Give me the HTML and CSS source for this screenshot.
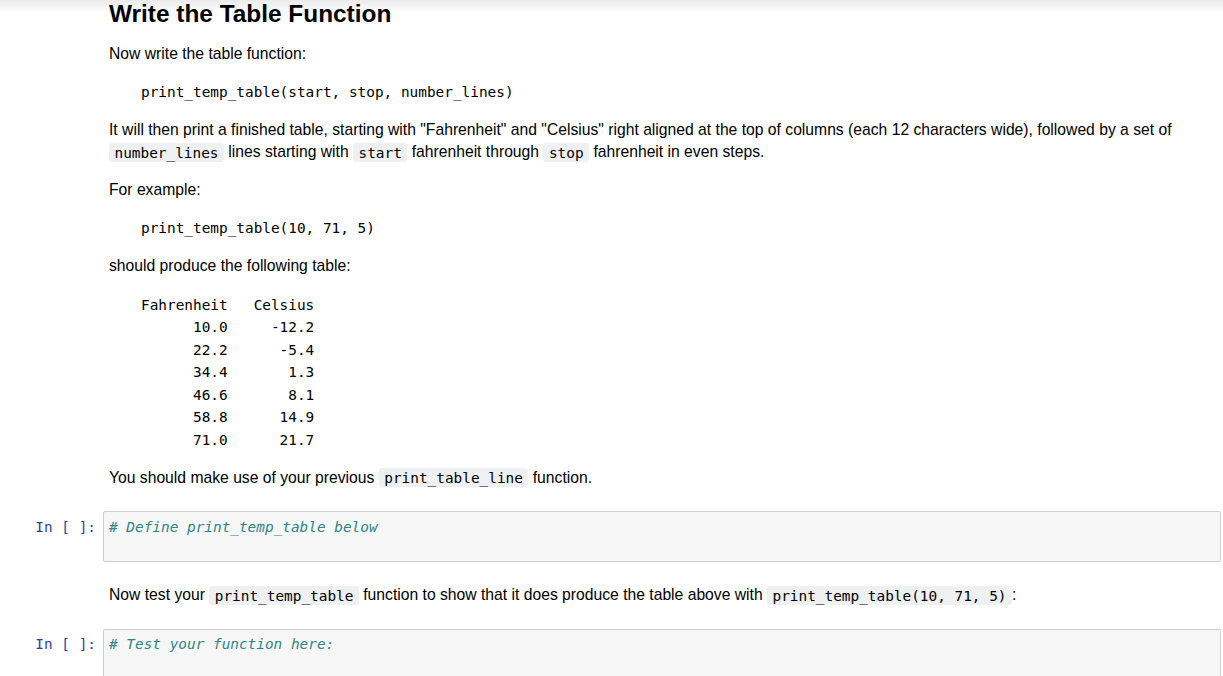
FILE: index.html
```html
<!DOCTYPE html>
<html>
<head>
<meta charset="utf-8">
<link rel="stylesheet" href="styles.css">
</head>
<body>
<div class="notebook">
  <div class="cell">
    <div class="prompt"></div>
    <div class="md">
      <h2 class="title">Write the Table Function</h2>
      <p>Now write the table function:</p>
      <pre class="block">print_temp_table(start, stop, number_lines)</pre>
      <p>It will then print a finished table, starting with "Fahrenheit" and "Celsius" right aligned at the top of columns (each 12 characters wide), followed by a set of <code>number_lines</code> lines starting with <code>start</code> fahrenheit through <code>stop</code> fahrenheit in even steps.</p>
      <p>For example:</p>
      <pre class="block">print_temp_table(10, 71, 5)</pre>
      <p>should produce the following table:</p>
      <pre class="block">Fahrenheit   Celsius
      10.0     -12.2
      22.2      -5.4
      34.4       1.3
      46.6       8.1
      58.8      14.9
      71.0      21.7</pre>
      <p>You should make use of your previous <code>print_table_line</code> function.</p>
    </div>
  </div>
  <div class="cell">
    <div class="prompt code-prompt">In [ ]:</div>
    <div class="input"><span class="comment"># Define print_temp_table below</span>
</div>
  </div>
  <div class="cell">
    <div class="prompt"></div>
    <div class="md">
      <p>Now test your <code>print_temp_table</code> function to show that it does produce the table above with <code>print_temp_table(10, 71, 5)</code>:</p>
    </div>
  </div>
  <div class="cell">
    <div class="prompt code-prompt">In [ ]:</div>
    <div class="input"><span class="comment"># Test your function here:</span>
</div>
  </div>
</div>
</body>
</html>
```
FILE: styles.css
```css
html, body {
  margin: 0;
  padding: 0;
}
body {
  background: linear-gradient(#ebebeb 0, #fbfbfb 10px, #ffffff 14px);
  font-family: "Liberation Sans", Arial, sans-serif;
  font-size: 15.7px;
  color: #000;
  width: 1223px;
  height: 676px;
  overflow: hidden;
}
.notebook {
  display: flex;
  flex-direction: column;
  gap: 22px;
  padding-right: 2px;
}
.cell {
  display: flex;
  align-items: flex-start;
}
.prompt {
  flex: 0 0 103px;
  box-sizing: border-box;
  padding-right: 7px;
  text-align: right;
  font-family: "DejaVu Sans Mono", monospace;
  font-size: 14.4px;
  line-height: 19.5px;
  color: #303f9f;
}
.code-prompt {
  padding-top: 6.5px;
}
.md {
  flex: 1;
  padding-left: 6px;
  padding-right: 6px;
  line-height: 22.5px;
}
.title {
  margin: 0 0 15.5px;
  font-size: 24.4px;
  font-weight: bold;
  line-height: 27px;
}
.md p {
  margin: 0 0 15.6px;
}
.md > :last-child {
  margin-bottom: 0;
}
.block {
  margin: 0 0 15.6px;
  padding-left: 32px;
  font-family: "DejaVu Sans Mono", monospace;
  font-size: 14.4px;
  line-height: 22.5px;
}
code {
  font-family: "DejaVu Sans Mono", monospace;
  font-size: 14.4px;
  background: #eff0f1;
  padding: 1.6px 5.5px;
  border-radius: 3px;
}
.input {
  flex: 1;
  box-sizing: border-box;
  height: 51px;
  border: 1px solid #cfcfcf;
  border-radius: 2px;
  background: #f7f7f7;
  padding: 5.5px 5px 4.5px;
  font-family: "DejaVu Sans Mono", monospace;
  font-size: 14.4px;
  line-height: 19.5px;
  white-space: pre;
}
.comment {
  color: #2f8585;
  font-style: italic;
}
```
